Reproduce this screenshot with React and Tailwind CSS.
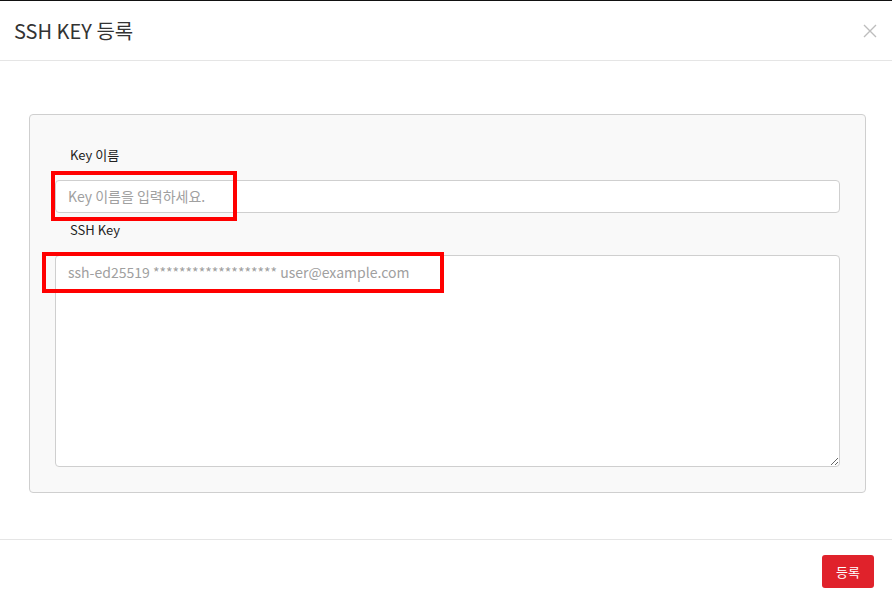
import { useState } from 'react';

const font = { fontFamily: '"Noto Sans CJK KR", "Noto Sans", sans-serif' };

export default function App() {
  const [name, setName] = useState('');
  const [key, setKey] = useState('');

  return (
    <div className="w-[892px] h-[603px] bg-white text-[#333] flex flex-col relative overflow-hidden" style={font}>
      <div className="h-px bg-[#111]" />

      {/* header */}
      <div className="h-[60px] flex items-center justify-between pl-[14px] pr-[15px] border-b border-[#e5e5e5]">
        <h2 className="text-[20px] leading-none text-[#333]">SSH KEY 등록</h2>
        <button className="w-[14px] h-[14px] text-[#bdbdbd]">
          <svg viewBox="0 0 14 14" width="14" height="14" fill="none" stroke="currentColor" strokeWidth="1.4">
            <path d="M1 1L13 13M13 1L1 13" />
          </svg>
        </button>
      </div>

      {/* body */}
      <div className="flex-1 pl-[29px] pr-[26px] pt-[53px] pb-[46px]">
        <div className="h-full bg-[#f9f9f9] border border-[#cfcfcf] rounded-[4px] pt-[28px] pb-[25px] px-[25px] flex flex-col">
          <label className="h-[24px] pl-[15px] text-[13px] font-normal leading-[24px] text-[#222]">Key 이름</label>
          <input
            value={name}
            onChange={(e) => setName(e.target.value)}
            placeholder="Key 이름을 입력하세요."
            className="mt-[13px] h-[33px] w-full bg-white border border-[#cfcfcf] rounded-[4px] px-[12px] pb-[2px] text-[14px] outline-none placeholder:text-[#a0a0a0]"
          />
          <label className="mt-[5px] h-[24px] pl-[15px] text-[13px] font-normal leading-[24px] text-[#222]">SSH Key</label>
          <textarea
            value={key}
            onChange={(e) => setKey(e.target.value)}
            placeholder="ssh-ed25519 ******************* user@example.com"
            className="mt-[13px] flex-1 w-full bg-white border border-[#cfcfcf] rounded-[4px] px-[12px] py-[6px] text-[14px] leading-[20px] outline-none placeholder:text-[#a0a0a0]"
          />
        </div>
      </div>

      {/* footer */}
      <div className="h-[64px] border-t border-[#e5e5e5] flex justify-end pt-[15px] pr-[18px]">
        <button className="h-[33px] w-[52px] rounded-[3px] bg-[#e0222b] text-white text-[13px]">등록</button>
      </div>

      {/* annotation boxes */}
      <div className="absolute left-[51px] top-[171px] w-[186px] h-[50px] border-4 border-[#ff0000]" />
      <div className="absolute left-[42px] top-[252px] w-[402px] h-[41px] border-4 border-[#ff0000]" />
    </div>
  );
}
